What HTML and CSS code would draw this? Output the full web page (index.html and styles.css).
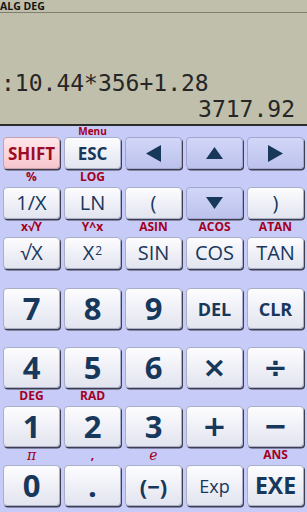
FILE: index.html
```html
<!DOCTYPE html>
<html>
<head>
<meta charset="utf-8">
<link rel="stylesheet" href="styles.css">
</head>
<body>
<div class="status">ALG DEG</div>
<div class="display">
  <div class="expr">:10.44*356+1.28</div>
  <div class="result">3717.92</div>
</div>
<div class="pad">
  <div class="row first">
    <div class="cell"><span class="lbl"></span><div class="key shift k-b">SHIFT</div></div>
    <div class="cell"><span class="lbl menu">Menu</span><div class="key k-b">ESC</div></div>
    <div class="cell"><span class="lbl"></span><div class="key arrow"><svg width="15" height="17" viewBox="0 0 15 17"><polygon points="15,0 15,17 0,8.5"/></svg></div></div>
    <div class="cell"><span class="lbl"></span><div class="key arrow"><svg width="17" height="12" viewBox="0 0 17 12"><polygon points="8.5,0 17,12 0,12"/></svg></div></div>
    <div class="cell"><span class="lbl"></span><div class="key arrow"><svg width="15" height="17" viewBox="0 0 15 17"><polygon points="0,0 15,8.5 0,17"/></svg></div></div>
  </div>
  <div class="row">
    <div class="cell"><span class="lbl">%</span><div class="key k-sm">1/X</div></div>
    <div class="cell"><span class="lbl">LOG</span><div class="key k-sm">LN</div></div>
    <div class="cell"><span class="lbl"></span><div class="key k-sm">(</div></div>
    <div class="cell"><span class="lbl"></span><div class="key arrow"><svg width="17" height="12" viewBox="0 0 17 12"><polygon points="0,0 17,0 8.5,12"/></svg></div></div>
    <div class="cell"><span class="lbl"></span><div class="key k-sm">)</div></div>
  </div>
  <div class="row">
    <div class="cell"><span class="lbl">x√Y</span><div class="key k-sm">√X</div></div>
    <div class="cell"><span class="lbl">Y^x</span><div class="key k-sm">X<span class="sup">2</span></div></div>
    <div class="cell"><span class="lbl">ASIN</span><div class="key k-sm">SIN</div></div>
    <div class="cell"><span class="lbl">ACOS</span><div class="key k-sm">COS</div></div>
    <div class="cell"><span class="lbl">ATAN</span><div class="key k-sm">TAN</div></div>
  </div>
  <div class="row big r7">
    <div class="cell"><span class="lbl"></span><div class="key k-num">7</div></div>
    <div class="cell"><span class="lbl"></span><div class="key k-num">8</div></div>
    <div class="cell"><span class="lbl"></span><div class="key k-num">9</div></div>
    <div class="cell"><span class="lbl"></span><div class="key k-mid">DEL</div></div>
    <div class="cell"><span class="lbl"></span><div class="key k-mid">CLR</div></div>
  </div>
  <div class="row big">
    <div class="cell"><span class="lbl"></span><div class="key k-num">4</div></div>
    <div class="cell"><span class="lbl"></span><div class="key k-num">5</div></div>
    <div class="cell"><span class="lbl"></span><div class="key k-num">6</div></div>
    <div class="cell"><span class="lbl"></span><div class="key k-op">×</div></div>
    <div class="cell"><span class="lbl"></span><div class="key k-op">÷</div></div>
  </div>
  <div class="row big">
    <div class="cell"><span class="lbl">DEG</span><div class="key k-num">1</div></div>
    <div class="cell"><span class="lbl">RAD</span><div class="key k-num">2</div></div>
    <div class="cell"><span class="lbl"></span><div class="key k-num">3</div></div>
    <div class="cell"><span class="lbl"></span><div class="key k-op">+</div></div>
    <div class="cell"><span class="lbl"></span><div class="key k-op">−</div></div>
  </div>
  <div class="row big">
    <div class="cell"><span class="lbl it">π</span><div class="key k-num">0</div></div>
    <div class="cell"><span class="lbl">,</span><div class="key k-num">.</div></div>
    <div class="cell"><span class="lbl it">e</span><div class="key k-neg">(−)</div></div>
    <div class="cell"><span class="lbl"></span><div class="key k-exp">Exp</div></div>
    <div class="cell"><span class="lbl">ANS</span><div class="key k-exe">EXE</div></div>
  </div>
</div>
</body>
</html>
```
FILE: styles.css
```css
* { box-sizing: border-box; margin: 0; padding: 0; }
html, body { width: 307px; height: 512px; overflow: hidden; }
body {
  background: #c6cbf7;
  font-family: "Open Sans", "Noto Sans", "DejaVu Sans", sans-serif;
}
.status {
  height: 13px;
  background: #bfbfab;
  border-bottom: 1px solid #7f7f70;
  font-weight: bold;
  font-size: 10.5px;
  line-height: 12px;
  color: #151515;
}
.display {
  height: 113px;
  background: #bfbfab;
  border-bottom: 2px solid #2c2c2c;
  display: flex;
  flex-direction: column;
  justify-content: flex-end;
  padding: 0 12px 2px 1px;
  font-family: "DejaVu Sans Mono", "Liberation Mono", monospace;
  font-size: 23px;
  line-height: 26px;
  color: #262626;
}
.result { text-align: right; }
.pad { padding: 0 3px; display: flex; flex-direction: column; }
.row {
  display: grid;
  grid-template-columns: repeat(5, 57px);
  column-gap: 4px;
}
.cell { display: flex; flex-direction: column; }
.lbl {
  height: 18px;
  display: flex;
  align-items: flex-end;
  justify-content: center;
  font-weight: bold;
  font-size: 12px;
  line-height: 12px;
  padding-bottom: 4px;
  color: #a3001e;
}
.lbl.it { font-style: italic; font-family: "DejaVu Serif", serif; font-weight: normal; font-size: 14px; }
.row.first .lbl { height: 11px; padding-bottom: 1px; }
.lbl.menu { font-size: 10px; line-height: 10px; }
.row.r7 .lbl { height: 19px; }
.key {
  height: 32px;
  border-radius: 4px;
  border: 1px solid #a9aec9;
  background: linear-gradient(#fdfdff, #e2e4ef);
  box-shadow: 1px 1.5px 0 #3e3e4e;
  display: flex;
  align-items: center;
  justify-content: center;
  color: #17375b;
  white-space: nowrap;
  line-height: 1;
}
.row.big .key { height: 41px; }
.key.shift {
  background: linear-gradient(#ffe6ea, #f7c6ce);
  color: #9c0c22;
  border-color: #c8a0a8;
}
.key.arrow {
  background: linear-gradient(#d2d6f8, #bcc2ec);
  border-color: #a0a6cf;
}
.key svg { fill: #17375b; display: block; }
.k-b { font-weight: bold; font-size: 17px; }
.k-sm { font-size: 20px; }
.sup { font-size: 12px; align-self: flex-start; margin-top: 7px; margin-left: 1px; }
.k-num { font-weight: bold; font-size: 31px; }
.k-mid { font-weight: bold; font-size: 18px; }
.k-op { font-family: "DejaVu Sans", sans-serif; font-weight: bold; font-size: 29px; }
.k-neg { font-weight: bold; font-size: 22px; }
.k-exp { font-size: 18px; }
.k-exe { font-weight: bold; font-size: 23px; }
```
